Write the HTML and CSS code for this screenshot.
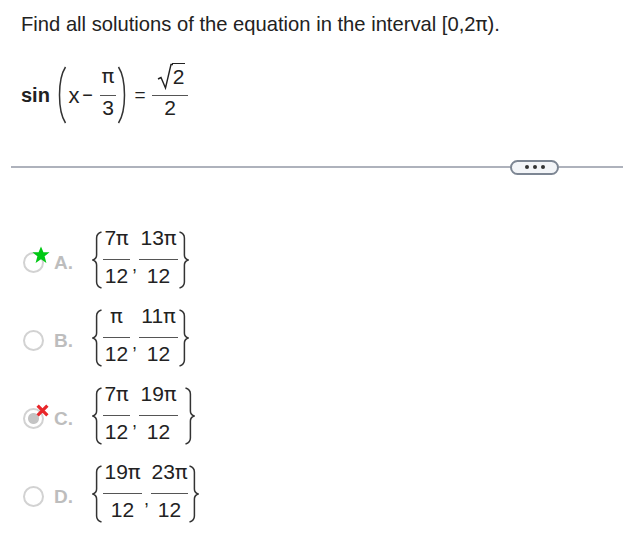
FILE: index.html
```
<!DOCTYPE html>
<html lang="en">
<head>
<meta charset="utf-8">
<title>Question</title>
<link rel="stylesheet" href="styles.css">
</head>
<body>
<svg class="defs" width="0" height="0" aria-hidden="true">
  <defs>
    <symbol id="brace-left" viewBox="0 0 11 58" preserveAspectRatio="none"><path d="M9.500 1C6 2 4.600 4 4.600 7V24C4.600 26.500 3.500 28 1 29C3.500 30 4.600 31.500 4.600 34V51C4.600 54 6 56 9.500 57" fill="none" stroke="#333" stroke-width="1.500"/></symbol>
    <symbol id="brace-right" viewBox="0 0 11 58" preserveAspectRatio="none"><path d="M1.500 1C5 2 6.400 4 6.400 7V24C6.400 26.500 7.500 28 10 29C7.500 30 6.400 31.500 6.400 34V51C6.400 54 5 56 1.500 57" fill="none" stroke="#333" stroke-width="1.500"/></symbol>
  </defs>
</svg>
<main class="page">
  <p class="prompt">Find all solutions of the equation in the interval [0,2<span class="pi">π</span>).</p>
  <div class="equation">
    <span class="sin">sin</span>
    <svg class="paren paren-left" viewBox="0 0 9 58"><path d="M7.500 1C3 8 1.500 18 1.500 29S3 50 7.500 57" fill="none" stroke="#333" stroke-width="1.500"/></svg>
    <span class="var">x</span>
    <span class="minus">−</span>
    <span class="frac frac-small"><span class="num"><span class="pi">π</span></span><span class="den">3</span></span>
    <svg class="paren paren-right" viewBox="0 0 9 58"><path d="M1.500 1C6 8 7.500 18 7.500 29S6 50 1.500 57" fill="none" stroke="#333" stroke-width="1.500"/></svg>
    <span class="equals">=</span>
    <span class="frac frac-root">
      <span class="num root-num">
        <svg class="radical" viewBox="0 0 16 27"><path d="M1 16L4 14.500L8.500 25L14 1.500H16" fill="none" stroke="#222" stroke-width="1.400"/></svg>
        <span class="radicand">2</span>
      </span>
      <span class="den">2</span>
    </span>
  </div>
  <div class="divider">
    <span class="rule rule-left"></span>
    <span class="more"><i></i><i></i><i></i></span>
    <span class="rule rule-right"></span>
  </div>
  <ul class="options">
    <li class="option">
      <span class="radio-wrap"><span class="radio"></span>
        <svg class="mark star" viewBox="0 0 20 20"><path d="M10 0.500L12.700 7H19.500L14 11.500L16 19L10 14.800L4 19L6 11.500L0.500 7H7.300Z" fill="#00c814"/></svg>
      </span>
      <span class="letter">A.</span>
      <span class="set">
        <svg class="brace"><use href="#brace-left"/></svg>
        <span class="frac f1"><span class="num">7<span class="pi">π</span></span><span class="den">12</span></span>
        <span class="comma">,</span>
        <span class="frac f2"><span class="num">13<span class="pi">π</span></span><span class="den">12</span></span>
        <svg class="brace"><use href="#brace-right"/></svg>
      </span>
    </li>
    <li class="option">
      <span class="radio-wrap"><span class="radio"></span></span>
      <span class="letter">B.</span>
      <span class="set">
        <svg class="brace"><use href="#brace-left"/></svg>
        <span class="frac f1"><span class="num"><span class="pi">π</span></span><span class="den">12</span></span>
        <span class="comma">,</span>
        <span class="frac f2"><span class="num">11<span class="pi">π</span></span><span class="den">12</span></span>
        <svg class="brace"><use href="#brace-right"/></svg>
      </span>
    </li>
    <li class="option">
      <span class="radio-wrap"><span class="radio radio-on"></span>
        <svg class="mark cross" viewBox="0 0 16 16"><path d="M2 2L14 14M14 2L2 14" fill="none" stroke="#e8262a" stroke-width="4"/></svg>
      </span>
      <span class="letter">C.</span>
      <span class="set">
        <svg class="brace"><use href="#brace-left"/></svg>
        <span class="frac f1"><span class="num">7<span class="pi">π</span></span><span class="den">12</span></span>
        <span class="comma">,</span>
        <span class="frac f2"><span class="num">19<span class="pi">π</span></span><span class="den">12</span></span>
        <svg class="brace brace-far"><use href="#brace-right"/></svg>
      </span>
    </li>
    <li class="option">
      <span class="radio-wrap"><span class="radio"></span></span>
      <span class="letter">D.</span>
      <span class="set">
        <svg class="brace"><use href="#brace-left"/></svg>
        <span class="frac f3"><span class="num">19<span class="pi">π</span></span><span class="den">12</span></span>
        <span class="comma comma-wide">,</span>
        <span class="frac f4"><span class="num">23<span class="pi">π</span></span><span class="den">12</span></span>
        <svg class="brace"><use href="#brace-right"/></svg>
      </span>
    </li>
  </ul>
</main>
</body>
</html>
```

FILE: styles.css
```
* { box-sizing: border-box; }
html, body { margin: 0; padding: 0; background: #fff; }
body { font-family: "Liberation Sans", Arial, sans-serif; color: #222; overflow: hidden; }
.defs { position: absolute; }
.page { width: 623px; height: 545px; padding-top: 12px; }
.pi { font-family: Roboto, "Liberation Sans", sans-serif; font-size: 1em; }
.prompt { margin: 0 0 0 21px; font-size: 20.200px; line-height: 24px; height: 24px; }
.equation { display: flex; align-items: center; height: 62px; margin: 28px 0 0 21px; font-size: 21px; }
.sin { font-weight: bold; font-size: 20px; width: 38px; padding-top: 1px; }
.paren { width: 9px; height: 58px; flex: none; }
.paren-left { margin-left: -1px; }
.var { width: 12px; margin-left: 1px; padding-top: 2px; text-align: center; font-size: 22px; }
.minus { width: 15px; text-align: center; font-size: 18px; }
.frac { display: flex; flex-direction: column; align-items: center; flex: none; }
.num { display: flex; justify-content: center; align-items: flex-end; height: 29px; padding-bottom: 8px; line-height: 26px; width: 100%; border-bottom: 1.500px solid #555; }
.den { height: 28px; line-height: 31px; }
.equation .den { line-height: 23px; }
.frac-small { width: 16px; margin-left: 5px; margin-right: 1px; }
.frac-small .num { padding-bottom: 6px; }
.equals { width: 24px; margin-left: 2px; text-align: center; font-size: 19px; }
.frac-root { width: 36px; }
.root-num { align-items: flex-end; padding: 0 0 5px 2px; }
.radical { width: 16px; height: 27px; flex: none; }
.radicand { border-top: 1.400px solid #222; height: 27px; line-height: 25px; padding: 0 1px; margin-left: -1px; }
.divider { display: flex; align-items: center; height: 14px; margin: 34px 0 0 11px; }
.rule { height: 2px; background: #aeb2bc; }
.rule-left { width: 499px; }
.rule-right { flex: 1; }
.more { display: flex; justify-content: center; align-items: center; gap: 4px; width: 49px; height: 15px; flex: none; border: 2px solid #7d8693; border-radius: 8px; background: #f3f5f8; }
.more i { width: 4px; height: 4px; border-radius: 50%; background: #333; }
.options { list-style: none; margin: 56px 0 0; padding: 0; display: flex; flex-direction: column; gap: 19px; }
.option { display: flex; align-items: center; height: 59px; margin-left: 23px; }
.radio-wrap { position: relative; width: 21px; height: 21px; flex: none; margin-top: 6px; }
.radio { display: block; width: 21px; height: 21px; border: 2px solid #d2d2d2; border-radius: 50%; background: #fff; }
.radio-on { background: radial-gradient(circle, #c4c4c4 0 5px, #fff 6px); }
.mark { position: absolute; }
.star { left: 9px; top: -6px; width: 18px; height: 18px; }
.cross { left: 13px; top: -4px; width: 13px; height: 13px; }
.letter { width: 38px; margin-left: 10px; margin-top: 6px; font-weight: bold; font-size: 19px; color: #bdbdbd; }
.set { display: flex; align-items: center; font-size: 21px; }
.brace { width: 11px; height: 58px; flex: none; }
.brace-far { margin-left: 6px; }
.f1 { width: 27px; }
.f2 { width: 39px; }
.f3 { width: 39px; }
.f4 { width: 37px; }
.comma { width: 9px; align-self: flex-end; text-align: center; height: 35px; line-height: 22px; font-size: 18px; }
.comma-wide { width: 9px; }
```
